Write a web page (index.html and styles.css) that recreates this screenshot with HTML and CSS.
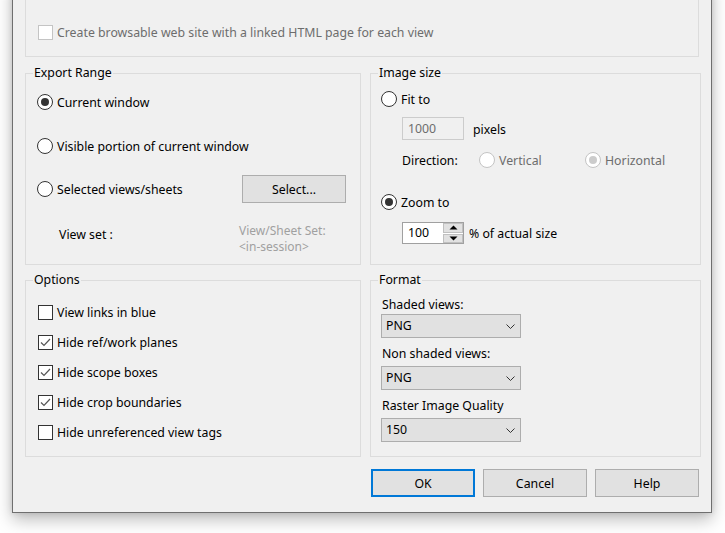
FILE: index.html
```html
<!DOCTYPE html>
<html>
<head>
<meta charset="utf-8">
<link rel="stylesheet" href="styles.css">
</head>
<body>
<div class="window">
  <div class="topbox">
    <div class="row h16">
      <span class="cb dis"></span>
      <span class="txt dim">Create browsable web site with a linked HTML page for each view</span>
    </div>
  </div>

  <div class="grid">
    <div class="group range">
      <div class="legend">Export Range</div>
      <div class="row r1"><span class="rb on"></span><span class="txt">Current window</span></div>
      <div class="row r2"><span class="rb"></span><span class="txt">Visible portion of current window</span></div>
      <div class="row r3">
        <span class="rb"></span><span class="txt">Selected views/sheets</span>
        <button class="btn select">Select...</button>
      </div>
      <div class="viewset">
        <span class="vs-label">View set :</span>
        <div class="vs-val"><div>View/Sheet Set:</div><div>&lt;in-session&gt;</div></div>
      </div>
    </div>

    <div class="group size">
      <div class="legend">Image size</div>
      <div class="row s1"><span class="rb"></span><span class="txt">Fit to</span></div>
      <div class="row s2">
        <div class="field dis">1000</div>
        <span class="txt pixels">pixels</span>
      </div>
      <div class="row s3">
        <span class="txt dirlabel">Direction:</span>
        <span class="dirgroup"><span class="rb dis"></span><span class="txt dim">Vertical</span></span>
        <span class="dirgroup"><span class="rb dis on"></span><span class="txt dim">Horizontal</span></span>
      </div>
      <div class="row s4"><span class="rb on"></span><span class="txt">Zoom to</span></div>
      <div class="row s5">
        <div class="spin">
          <div class="spin-val">100</div>
          <div class="spin-btns">
            <div class="sb"><svg width="9" height="5" viewBox="0 0 9 5"><path d="M0.5 4.5 L4.5 0.5 L8.5 4.5 Z" fill="#000"/></svg></div>
            <div class="sb"><svg width="9" height="5" viewBox="0 0 9 5"><path d="M0.5 0.5 L4.5 4.5 L8.5 0.5 Z" fill="#000"/></svg></div>
          </div>
        </div>
        <span class="txt pct">% of actual size</span>
      </div>
    </div>

    <div class="group options">
      <div class="legend">Options</div>
      <div class="row o"><span class="cb"></span><span class="txt">View links in blue</span></div>
      <div class="row o"><span class="cb"><svg width="13" height="13" viewBox="0 0 13 13"><path d="M2 6.5 L5 9.5 L11 3" fill="none" stroke="#555" stroke-width="1.2"/></svg></span><span class="txt">Hide ref/work planes</span></div>
      <div class="row o"><span class="cb"><svg width="13" height="13" viewBox="0 0 13 13"><path d="M2 6.5 L5 9.5 L11 3" fill="none" stroke="#555" stroke-width="1.2"/></svg></span><span class="txt">Hide scope boxes</span></div>
      <div class="row o"><span class="cb"><svg width="13" height="13" viewBox="0 0 13 13"><path d="M2 6.5 L5 9.5 L11 3" fill="none" stroke="#555" stroke-width="1.2"/></svg></span><span class="txt">Hide crop boundaries</span></div>
      <div class="row o"><span class="cb"></span><span class="txt">Hide unreferenced view tags</span></div>
    </div>

    <div class="group format">
      <div class="legend">Format</div>
      <div class="flabel first">Shaded views:</div>
      <div class="dropdown"><span>PNG</span><svg width="9" height="5" viewBox="0 0 9 5"><path d="M0.5 0.5 L4.5 4.5 L8.5 0.5" fill="none" stroke="#333" stroke-width="1"/></svg></div>
      <div class="flabel">Non shaded views:</div>
      <div class="dropdown"><span>PNG</span><svg width="9" height="5" viewBox="0 0 9 5"><path d="M0.5 0.5 L4.5 4.5 L8.5 0.5" fill="none" stroke="#333" stroke-width="1"/></svg></div>
      <div class="flabel">Raster Image Quality</div>
      <div class="dropdown"><span>150</span><svg width="9" height="5" viewBox="0 0 9 5"><path d="M0.5 0.5 L4.5 4.5 L8.5 0.5" fill="none" stroke="#333" stroke-width="1"/></svg></div>
    </div>
  </div>

  <div class="buttons">
    <button class="btn default">OK</button>
    <button class="btn">Cancel</button>
    <button class="btn">Help</button>
  </div>
</div>
</body>
</html>
```
FILE: styles.css
```css
html {
  overflow: hidden;
  background: #ffffff;
}
body {
  margin: 0;
  padding: 0 0 30px 0;
  font-family: "Noto Sans", "Open Sans", sans-serif;
  font-size: 12.3px;
  line-height: 16px;
  color: #000;
}
.window {
  width: 700px;
  box-sizing: border-box;
  margin: -20px 0 0 12px;
  border: 1px solid #6f6f6f;
  background: #f0f0f0;
  padding: 0 10px 15px 12px;
  box-shadow: 0 7px 16px rgba(0, 0, 0, 0.26), 0 0 6px rgba(0, 0, 0, 0.12);
}
.topbox {
  width: 674px;
  box-sizing: border-box;
  margin-top: 5px;
  border: 1px solid #dcdcdc;
  padding: 37px 0 16px 12px;
}
.row {
  display: flex;
  align-items: center;
}
.h16 { height: 16px; }
.txt {
  white-space: nowrap;
  margin-top: 2px;
}
.dim { color: #6d6d6d; }

/* checkbox */
.cb {
  width: 15px;
  height: 15px;
  box-sizing: border-box;
  border: 1px solid #333;
  background: #fff;
  margin-right: 4px;
  flex: none;
  display: flex;
}
.cb.dis { border-color: #c4c4c4; }

/* radio */
.rb {
  width: 16px;
  height: 16px;
  box-sizing: border-box;
  border: 1px solid #333;
  border-radius: 50%;
  background: #fff;
  margin-right: 4px;
  flex: none;
  position: relative;
}
.rb.on::after {
  content: "";
  position: absolute;
  left: 3px;
  top: 3px;
  width: 8px;
  height: 8px;
  border-radius: 50%;
  background: #333;
}
.rb.dis { border-color: #c4c4c4; }
.rb.dis.on::after { background: #cccccc; }

.grid {
  margin-top: 16px;
  display: grid;
  grid-template-columns: 336px 331px;
  grid-template-rows: 192px 177px;
  column-gap: 9px;
  row-gap: 15px;
}
.group {
  border: 1px solid #dcdcdc;
  box-sizing: border-box;
  padding-left: var(--pad);
}
.legend {
  width: fit-content;
  margin: -9px 0 0 calc(7px - var(--pad));
  padding: 0 1px;
  background: #f0f0f0;
  line-height: 16px;
}

/* Export range */
.range { --pad: 11px; }
.r1 { height: 24px; margin-top: 9px; }
.r2 { height: 24px; margin-top: 20px; }
.r3 { height: 28px; margin-top: 17px; padding-right: 14px; }
.r3 .select { margin-left: auto; }
.viewset {
  margin-top: 20px;
  display: flex;
  height: 32px;
}
.vs-label {
  margin-left: 22px;
  padding-top: 4px;
  width: 180px;
  white-space: nowrap;
}
.vs-val {
  color: #a0a0a0;
  font-size: 12px;
  line-height: 16px;
  white-space: nowrap;
}

.btn {
  width: 104px;
  height: 28px;
  box-sizing: border-box;
  border: 1px solid #adadad;
  background: #e1e1e1;
  font-family: inherit;
  font-size: 12.3px;
  color: #000;
  padding: 1px 0 0 0;
  margin: 0;
}
.btn.default {
  border: 2px solid #0078d7;
}

/* Image size */
.size { --pad: 10px; }
.s1 { height: 20px; margin-top: 8px; }
.s2 { height: 23px; margin-top: 8px; }
.field {
  margin-left: 21px;
  width: 62px;
  height: 23px;
  box-sizing: border-box;
  border: 1px solid #cccccc;
  background: #f0f0f0;
  color: #6d6d6d;
  padding-left: 5px;
  line-height: 21px;
}
.pixels { margin-left: 9px; }
.s3 { height: 20px; margin-top: 10px; }
.dirlabel { margin-left: 21px; width: 77px; }
.dirgroup { display: flex; align-items: center; width: 106px; }
.s4 { height: 20px; margin-top: 22px; }
.s5 { height: 22px; margin-top: 10px; }
.spin {
  margin-left: 21px;
  width: 62px;
  height: 22px;
  box-sizing: border-box;
  border: 1px solid #a0a0a0;
  background: #fff;
  display: flex;
}
.spin-val {
  flex: 1;
  padding-left: 5px;
  line-height: 20px;
}
.spin-btns {
  width: 20px;
  display: flex;
  flex-direction: column;
  gap: 1px;
  background: #fff;
}
.sb {
  flex: 1;
  background: #e1e1e1;
  border: 1px solid #c0c0c0;
  display: flex;
  align-items: center;
  justify-content: center;
}
.pct { margin-left: 5px; }

/* Options */
.options { --pad: 12px; }
.o { height: 30px; }
.legend + .o { margin-top: 9px; }

/* Format */
.format { --pad: 10px; }
.flabel {
  margin-left: 1px;
  line-height: 16px;
  margin-top: 8px;
  white-space: nowrap;
}
.flabel.first { margin-top: 9px; }
.dropdown {
  margin-top: 4px;
  width: 140px;
  height: 24px;
  box-sizing: border-box;
  border: 1px solid #adadad;
  background: #e1e1e1;
  display: flex;
  align-items: center;
  justify-content: space-between;
  padding: 0 5px 0 4px;
}
.flabel.first + .dropdown { margin-top: 1px; }

.buttons {
  margin-top: 12px;
  display: flex;
  justify-content: flex-end;
  gap: 8px;
  padding-right: 2px;
}
```
